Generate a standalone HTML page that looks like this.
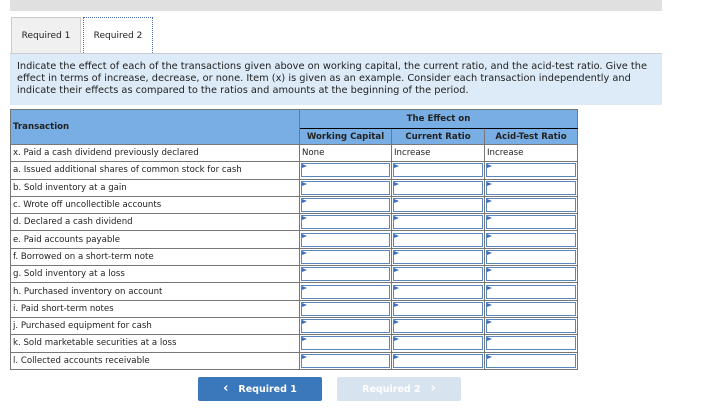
<!DOCTYPE html>
<html><head><style>
body{margin:0;width:728px;height:411px;background:#fff;font-family:"DejaVu Sans","Liberation Sans",sans-serif;position:relative;overflow:hidden;color:#222}
.a{position:absolute}
.tab{position:absolute;top:17px;height:36px;box-sizing:border-box;font-size:9px;line-height:36px;text-align:center}
table{position:absolute;left:10px;top:109px;border-collapse:collapse;width:567px;font-size:8.6px;table-layout:fixed}
td{border:1px solid #777;padding:0 2px;height:17.3px;box-sizing:border-box;white-space:nowrap;overflow:hidden}
.h{background:#78aee4;font-weight:bold;text-align:center;color:#222}
.in{padding:1px}
.in div{height:14px;border:1.5px solid #5b86bd;box-sizing:border-box;position:relative}
.in div:before{content:"";position:absolute;left:0;top:0;border-left:5px solid #3a6fc0;border-top:2.5px solid transparent;border-bottom:2.5px solid transparent}
</style></head><body>
<div class="a" style="left:10px;top:0;width:652px;height:11px;background:#e0e0e0"></div>
<div class="tab" style="left:11px;width:70px;background:#f0f0f0;border:1px solid #ccc;border-bottom:none">Required 1</div>
<div class="tab" style="left:83px;width:70px;background:#fff;border:1px dotted #4a70b0;border-bottom:none">Required 2</div>
<div class="a" style="left:10px;top:53px;width:652px;height:52px;background:#dcebf7;border-top:1px solid #ccc;box-sizing:border-box"></div>
<div class="a" style="left:17px;top:61px;width:642px;font-size:9.8px;line-height:12px;color:#222">Indicate the effect of each of the transactions given above on working capital, the current ratio, and the acid-test ratio. Give the effect in terms of increase, decrease, or none. Item (x) is given as an example. Consider each transaction independently and indicate their effects as compared to the ratios and amounts at the beginning of the period.</div>
<table>
<colgroup><col style="width:289px"><col style="width:92px"><col style="width:93px"><col style="width:93px"></colgroup>
<tr><td class="h" rowspan="2" style="text-align:left;height:35px">Transaction</td><td class="h" colspan="3" style="border-bottom:1px solid #000;height:19px">The Effect on</td></tr>
<tr><td class="h" style="height:16px">Working Capital</td><td class="h" style="height:16px">Current Ratio</td><td class="h" style="height:16px">Acid-Test Ratio</td></tr>
<tr><td>x. Paid a cash dividend previously declared</td><td>None</td><td>Increase</td><td>Increase</td></tr>
<tr><td>a. Issued additional shares of common stock for cash</td><td class="in"><div></div></td><td class="in"><div></div></td><td class="in"><div></div></td></tr>
<tr><td>b. Sold inventory at a gain</td><td class="in"><div></div></td><td class="in"><div></div></td><td class="in"><div></div></td></tr>
<tr><td>c. Wrote off uncollectible accounts</td><td class="in"><div></div></td><td class="in"><div></div></td><td class="in"><div></div></td></tr>
<tr><td>d. Declared a cash dividend</td><td class="in"><div></div></td><td class="in"><div></div></td><td class="in"><div></div></td></tr>
<tr><td>e. Paid accounts payable</td><td class="in"><div></div></td><td class="in"><div></div></td><td class="in"><div></div></td></tr>
<tr><td>f. Borrowed on a short-term note</td><td class="in"><div></div></td><td class="in"><div></div></td><td class="in"><div></div></td></tr>
<tr><td>g. Sold inventory at a loss</td><td class="in"><div></div></td><td class="in"><div></div></td><td class="in"><div></div></td></tr>
<tr><td>h. Purchased inventory on account</td><td class="in"><div></div></td><td class="in"><div></div></td><td class="in"><div></div></td></tr>
<tr><td>i. Paid short-term notes</td><td class="in"><div></div></td><td class="in"><div></div></td><td class="in"><div></div></td></tr>
<tr><td>j. Purchased equipment for cash</td><td class="in"><div></div></td><td class="in"><div></div></td><td class="in"><div></div></td></tr>
<tr><td>k. Sold marketable securities at a loss</td><td class="in"><div></div></td><td class="in"><div></div></td><td class="in"><div></div></td></tr>
<tr><td>l. Collected accounts receivable</td><td class="in"><div></div></td><td class="in"><div></div></td><td class="in"><div></div></td></tr>
</table>
<div class="a" style="left:198px;top:377px;width:124px;height:24px;background:#3a77bb;border-radius:2px;color:#fff;font-size:9.5px;font-weight:bold;line-height:24px;text-align:center"><span style="font-size:13px">‹</span>&nbsp;&nbsp;&nbsp;Required 1</div>
<div class="a" style="left:337px;top:377px;width:124px;height:24px;background:#d8e3f0;border-radius:2px;color:#fff;font-size:9.5px;font-weight:bold;line-height:24px;text-align:center">Required 2&nbsp;&nbsp;&nbsp;<span style="font-size:13px">›</span></div>
</body></html>
